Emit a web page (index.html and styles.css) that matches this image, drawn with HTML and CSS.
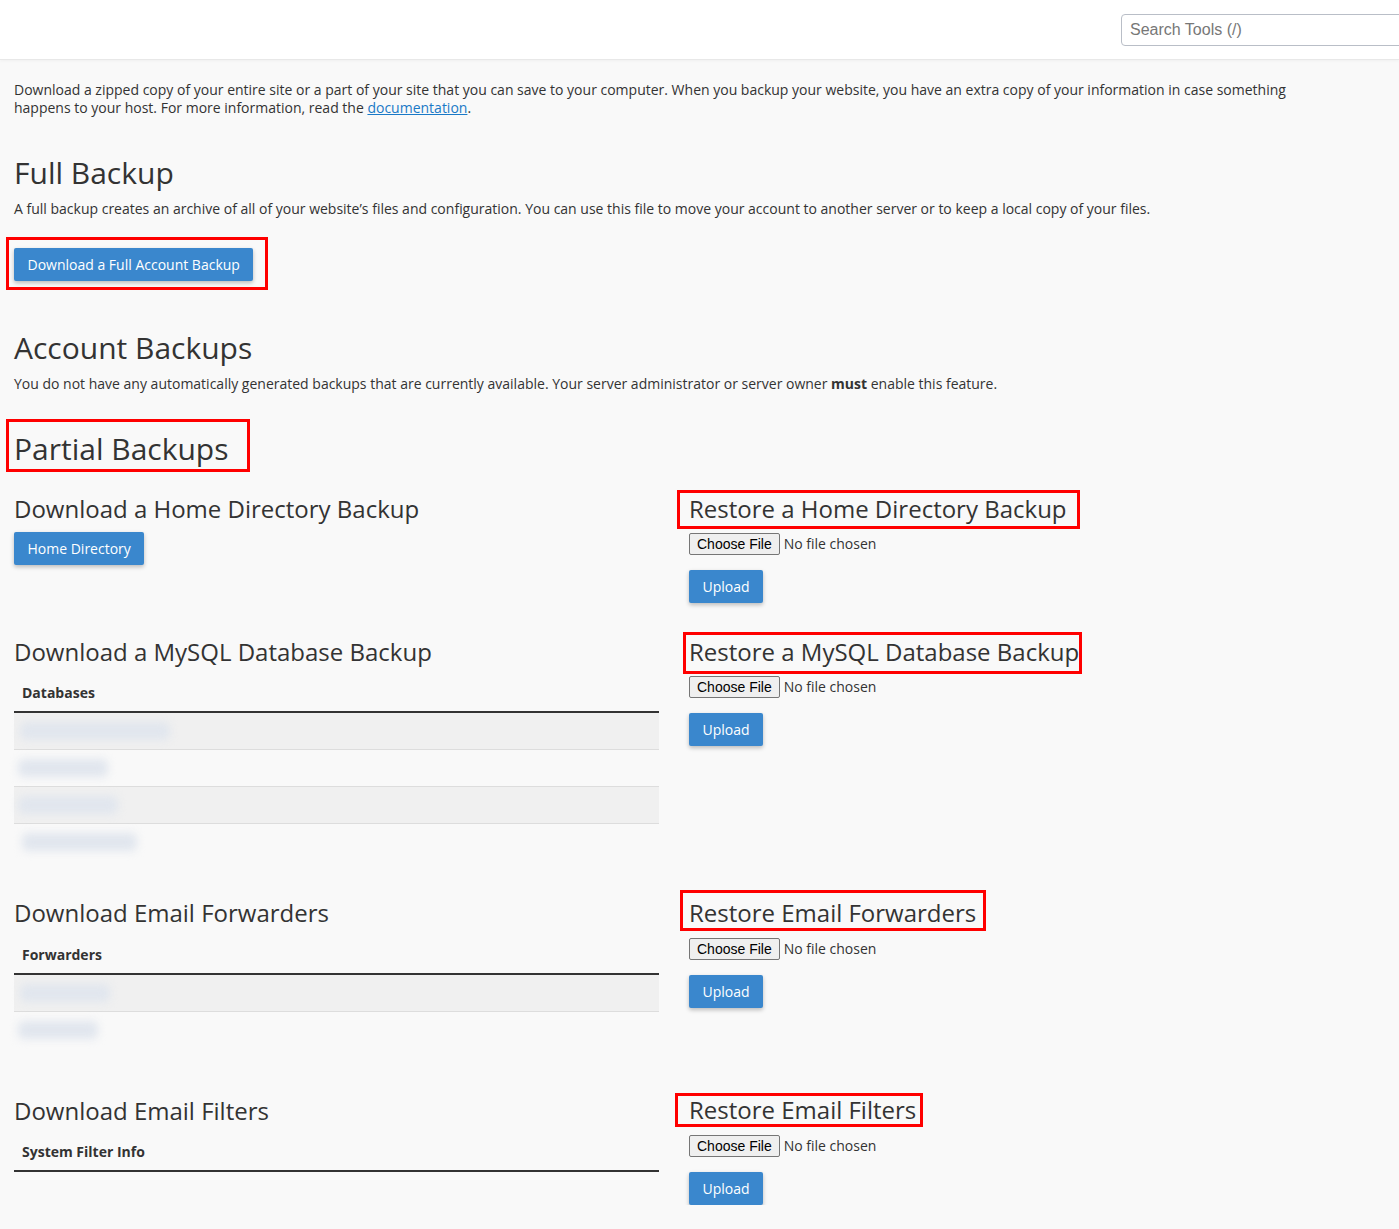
FILE: index.html
```html
<!DOCTYPE html>
<html lang="en">
<head>
<meta charset="utf-8">
<title>Backup</title>
<link rel="stylesheet" href="styles.css">
</head>
<body>
<header class="topbar">
  <div class="search"><span class="search-ph">Search Tools (/)</span></div>
</header>
<main class="content">
  <p class="intro">Download a zipped copy of your entire site or a part of your site that you can save to your computer. When you backup your website, you have an extra copy of your information in case something happens to your host. For more information, read the <a href="#" class="link">documentation</a>.</p>

  <section class="block block-full">
    <h2 class="title">Full Backup</h2>
    <p class="desc">A full backup creates an archive of all of your website’s files and configuration. You can use this file to move your account to another server or to keep a local copy of your files.</p>
    <div class="mark mark-full"><span class="btn">Download a Full Account Backup</span></div>
  </section>

  <section class="block block-account">
    <h2 class="title">Account Backups</h2>
    <p class="desc">You do not have any automatically generated backups that are currently available. Your server administrator or server owner <strong>must</strong> enable this feature.</p>
  </section>

  <section class="block block-partial">
    <h2 class="title"><span class="mark mark-partial">Partial Backups</span></h2>
  </section>

  <div class="pair pair-home">
    <div class="col">
      <h3 class="sub">Download a Home Directory Backup</h3>
      <span class="btn">Home Directory</span>
    </div>
    <div class="col">
      <h3 class="sub sub-r"><span class="mark mark-home">Restore a Home Directory Backup</span></h3>
      <div class="file"><span class="file-btn">Choose File</span><span class="file-txt">No file chosen</span></div>
      <span class="btn btn-upload">Upload</span>
    </div>
  </div>

  <div class="pair pair-mysql">
    <div class="col">
      <h3 class="sub">Download a MySQL Database Backup</h3>
      <table class="tbl">
        <thead><tr><th>Databases</th></tr></thead>
        <tbody>
          <tr><td><span class="blur b1"></span></td></tr>
          <tr><td><span class="blur b2"></span></td></tr>
          <tr><td><span class="blur b3"></span></td></tr>
          <tr><td><span class="blur b4"></span></td></tr>
        </tbody>
      </table>
    </div>
    <div class="col">
      <h3 class="sub sub-r"><span class="mark mark-mysql">Restore a MySQL Database Backup</span></h3>
      <div class="file"><span class="file-btn">Choose File</span><span class="file-txt">No file chosen</span></div>
      <span class="btn btn-upload">Upload</span>
    </div>
  </div>

  <div class="pair pair-fwd">
    <div class="col">
      <h3 class="sub">Download Email Forwarders</h3>
      <table class="tbl">
        <thead><tr><th>Forwarders</th></tr></thead>
        <tbody>
          <tr><td><span class="blur b5"></span></td></tr>
          <tr><td><span class="blur b6"></span></td></tr>
        </tbody>
      </table>
    </div>
    <div class="col">
      <h3 class="sub sub-r"><span class="mark mark-fwd">Restore Email Forwarders</span></h3>
      <div class="file"><span class="file-btn">Choose File</span><span class="file-txt">No file chosen</span></div>
      <span class="btn btn-upload">Upload</span>
    </div>
  </div>

  <div class="pair pair-filters">
    <div class="col">
      <h3 class="sub">Download Email Filters</h3>
      <table class="tbl">
        <thead><tr><th>System Filter Info</th></tr></thead>
      </table>
    </div>
    <div class="col">
      <h3 class="sub sub-r"><span class="mark mark-filters">Restore Email Filters</span></h3>
      <div class="file"><span class="file-btn">Choose File</span><span class="file-txt">No file chosen</span></div>
      <span class="btn btn-upload">Upload</span>
    </div>
  </div>
</main>
</body>
</html>
```

FILE: styles.css
```css
* { box-sizing: border-box; }
html, body { margin: 0; padding: 0; }
body {
  background: #f9f9f9;
  font-family: "Open Sans", "Noto Sans", sans-serif;
  color: #333;
  font-size: 14px;
  line-height: 18px;
  overflow: hidden;
}
.topbar {
  height: 60px;
  background: #fff;
  border-bottom: 1px solid #e8e8e8;
  box-shadow: 0 1px 3px rgba(0,0,0,0.04);
  display: flex;
  justify-content: flex-end;
  align-items: flex-start;
  padding-top: 14px;
  overflow: hidden;
}
.search {
  width: 300px;
  height: 32px;
  margin-right: -22px;
  border: 1px solid #b9bec7;
  border-radius: 4px;
  background: #fff;
  display: flex;
  align-items: center;
  padding-left: 8px;
}
.search-ph {
  font-family: "Liberation Sans", Arial, sans-serif;
  font-size: 16px;
  color: #777;
}
.content {
  padding: 21px 0 0 14px;
  width: 1334px;
}
.intro { margin: 0; width: 1300px; }
.link { color: #1a79c7; text-decoration: underline; }
.block { margin: 0; }
.title {
  font-size: 30px;
  line-height: 36px;
  font-weight: 400;
  margin: 0;
  color: #333;
}
.desc { margin: 8px 0 0; padding-top: 1px; }
.block-full { margin-top: 38px; }
.block-account { margin-top: 49px; }
.block-partial { margin-top: 38px; }

.btn {
  display: inline-block;
  background: #3a87cd;
  color: #fff;
  font-size: 14px;
  line-height: 21px;
  padding: 6px 13.5px;
  border-radius: 2px;
  box-shadow: 0 2px 4px rgba(0,0,0,0.25);
}
.mark {
  display: block;
  width: fit-content;
  border: 3px solid #ff0000;
}
.mark-full { display: flex; margin: 19px 0 -9px -8px; padding: 8px 12px 6px 5px; }
.mark-partial { margin: -12px 0 -5px -8px; padding: 9px 18px 2px 5px; }
.mark-home { margin: -4px 0 -5px -12px; padding: 1px 10px 2px 9px; }
.mark-mysql { margin: -5px 0 -7px -6px; padding: 2px 0 4px 3px; }
.mark-fwd { margin: -8px 0 -3px -9px; padding: 5px 7px 0 6px; }
.mark-filters { margin: -3px 0 -1px -14px; padding: 0 4px 0 11px; line-height: 28px; }

.pair {
  display: grid;
  grid-template-columns: 645px 645px;
  column-gap: 30px;
  align-items: start;
}
.pair-home { margin-top: 27px; }
.pair-mysql { margin-top: 34px; }
.pair-fwd { margin-top: 38px; }
.pair-filters { margin-top: 48px; }
.col { display: flex; flex-direction: column; align-items: flex-start; }
.sub {
  font-size: 24px;
  line-height: 30px;
  font-weight: 400;
  margin: 0 0 8px;
  color: #333;
}
.sub-r { margin-bottom: 0; }
.file { display: flex; align-items: center; height: 22px; margin-top: 9px; }
.pair-fwd .file { margin-top: 10px; }
.file-btn {
  font-family: "Liberation Sans", Arial, sans-serif;
  font-size: 14px;
  color: #000;
  background: #efefef;
  border: 1px solid #767676;
  border-radius: 2px;
  height: 22px;
  line-height: 20px;
  padding: 0 7px;
}
.file-txt { margin-left: 4px; font-size: 14px; color: #333; }
.btn-upload { margin-top: 15px; }
.tbl {
  width: 645px;
  border-collapse: separate;
  border-spacing: 0;
  margin-top: 0;
}
.pair-fwd .tbl { margin-top: 1px; }
.tbl th {
  text-align: left;
  font-weight: 700;
  padding: 8px;
  line-height: 20px;
  border-bottom: 2px solid #333;
}
.tbl td {
  padding: 8px 4px;
  line-height: 20px;
  border-top: 1px solid #ddd;
}
.tbl tbody tr:first-child td { border-top: 0; padding-top: 8px; }
.tbl tbody tr:nth-child(odd) { background: #f0f0f0; }
.blur {
  display: block;
  height: 18px;
  margin: 1px 0;
  background: #e1e6ee;
  filter: blur(4px);
  border-radius: 6px;
}
.b1 { width: 150px; margin-left: 2px; }
.b2 { width: 90px; }
.b3 { width: 100px; }
.b4 { width: 115px; margin-left: 4px; }
.b5 { width: 90px; margin-left: 2px; }
.b6 { width: 80px; }
```
